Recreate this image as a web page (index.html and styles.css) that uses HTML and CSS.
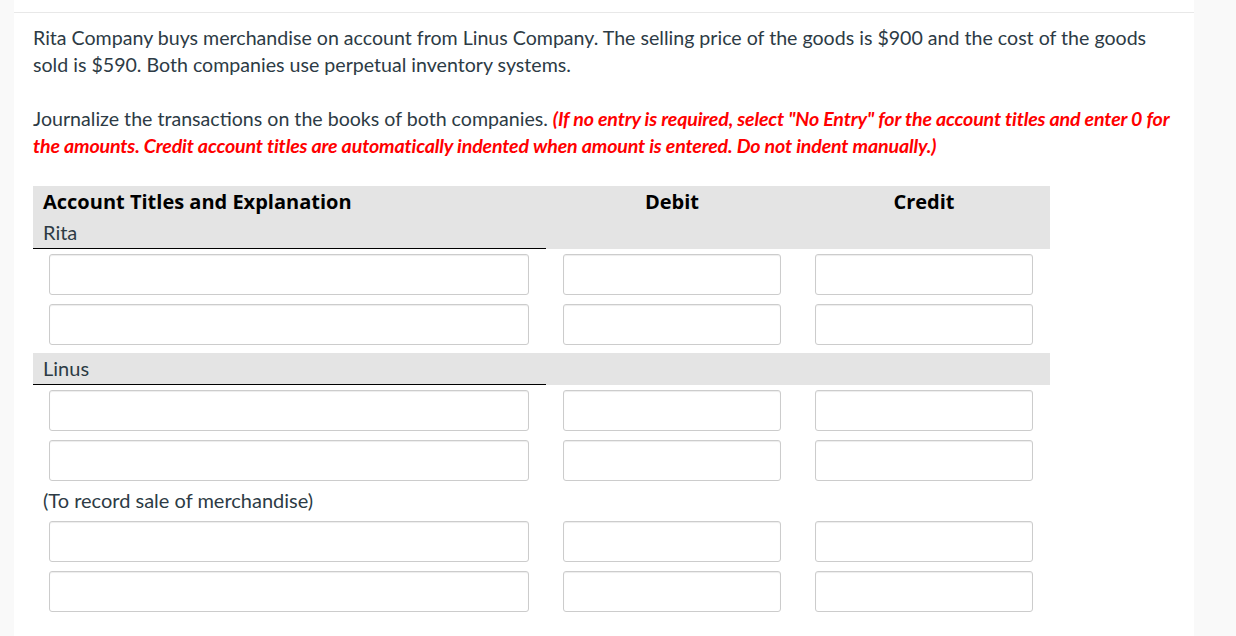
FILE: index.html
```html
<!DOCTYPE html>
<html lang="en">
<head>
<meta charset="utf-8">
<title>Journal entry</title>
<link rel="stylesheet" href="styles.css">
</head>
<body>
<main class="page">
  <div class="content">
    <p class="question">Rita Company buys merchandise on account from Linus Company. The selling price of the goods is $900 and the cost of the goods sold is $590. Both companies use perpetual inventory systems.</p>
    <p class="question">Journalize the transactions on the books of both companies. <em class="note">(If no entry is required, select "No Entry" for the account titles and enter 0 for the amounts. Credit account titles are automatically indented when amount is entered. Do not indent manually.)</em></p>

    <div class="journal">
      <div class="row head">
        <div class="cell title">Account Titles and Explanation</div>
        <div class="cell center">Debit</div>
        <div class="cell center">Credit</div>
      </div>
      <div class="row band">
        <div class="cell label ruled">Rita</div>
        <div class="cell"></div>
        <div class="cell"></div>
      </div>
      <div class="row entry">
        <div class="cell acct"><input class="field" type="text"></div>
        <div class="cell amt"><input class="field" type="text"></div>
        <div class="cell amt"><input class="field" type="text"></div>
      </div>
      <div class="row entry">
        <div class="cell acct"><input class="field" type="text"></div>
        <div class="cell amt"><input class="field" type="text"></div>
        <div class="cell amt"><input class="field" type="text"></div>
      </div>
      <div class="row band spaced">
        <div class="cell label ruled">Linus</div>
        <div class="cell"></div>
        <div class="cell"></div>
      </div>
      <div class="row entry">
        <div class="cell acct"><input class="field" type="text"></div>
        <div class="cell amt"><input class="field" type="text"></div>
        <div class="cell amt"><input class="field" type="text"></div>
      </div>
      <div class="row entry">
        <div class="cell acct"><input class="field" type="text"></div>
        <div class="cell amt"><input class="field" type="text"></div>
        <div class="cell amt"><input class="field" type="text"></div>
      </div>
      <div class="row explain">
        <div class="cell label">(To record sale of merchandise)</div>
        <div class="cell"></div>
        <div class="cell"></div>
      </div>
      <div class="row entry">
        <div class="cell acct"><input class="field" type="text"></div>
        <div class="cell amt"><input class="field" type="text"></div>
        <div class="cell amt"><input class="field" type="text"></div>
      </div>
      <div class="row entry">
        <div class="cell acct"><input class="field" type="text"></div>
        <div class="cell amt"><input class="field" type="text"></div>
        <div class="cell amt"><input class="field" type="text"></div>
      </div>
    </div>
  </div>
</main>
</body>
</html>
```

FILE: styles.css
```css
html, body {
  margin: 0;
  padding: 0;
}

body {
  background: #f9f9f9;
  font-family: Lato, "Liberation Sans", sans-serif;
  color: #2d3b45;
}

.page {
  margin-left: 14px;
  width: 1180px;
  min-height: 636px;
  background: #ffffff;
  padding-top: 12px;
  box-sizing: border-box;
}

.content {
  border-top: 1px solid #e8e8e8;
  padding: 11px 0 0 19px;
}

.question {
  margin: 0 0 27px 0;
  font-size: 19.6px;
  line-height: 27px;
  width: 1150px;
}

.question:last-of-type {
  margin-bottom: 27px;
}

.note {
  color: #ff0000;
  font-weight: 700;
  font-style: italic;
  letter-spacing: -0.15px;
}

.journal {
  width: 1017px;
}

.row {
  display: grid;
  grid-template-columns: 513px 252px 252px;
}

.head,
.band {
  background: #e4e4e4;
}

.spaced {
  margin-top: 4px;
}

.cell {
  box-sizing: border-box;
}

.head .cell {
  height: 31px;
  line-height: 31px;
  font-family: "Open Sans", "DejaVu Sans", sans-serif;
  font-weight: 700;
  font-size: 20px;
  color: #000000;
}

.head .title {
  padding-left: 10px;
}

.center {
  text-align: center;
}

.label {
  height: 31px;
  line-height: 31px;
  padding-left: 10px;
  font-size: 20px;
  color: #2d3b45;
}

.ruled {
  height: 32px;
  border-bottom: 1px solid #000000;
}

.entry .cell {
  height: 50px;
  padding-top: 5px;
}

.acct {
  padding-left: 16px;
}

.amt {
  padding-left: 17px;
}

.field {
  display: block;
  box-sizing: border-box;
  height: 41px;
  margin: 0;
  padding: 4px 8px;
  background: #ffffff;
  border: 1px solid #cccccc;
  border-radius: 3px;
  box-shadow: inset 0 1px 1px rgba(0, 0, 0, 0.075);
  font: 16px Lato, sans-serif;
}

.acct .field {
  width: 480px;
}

.amt .field {
  width: 218px;
}
```
